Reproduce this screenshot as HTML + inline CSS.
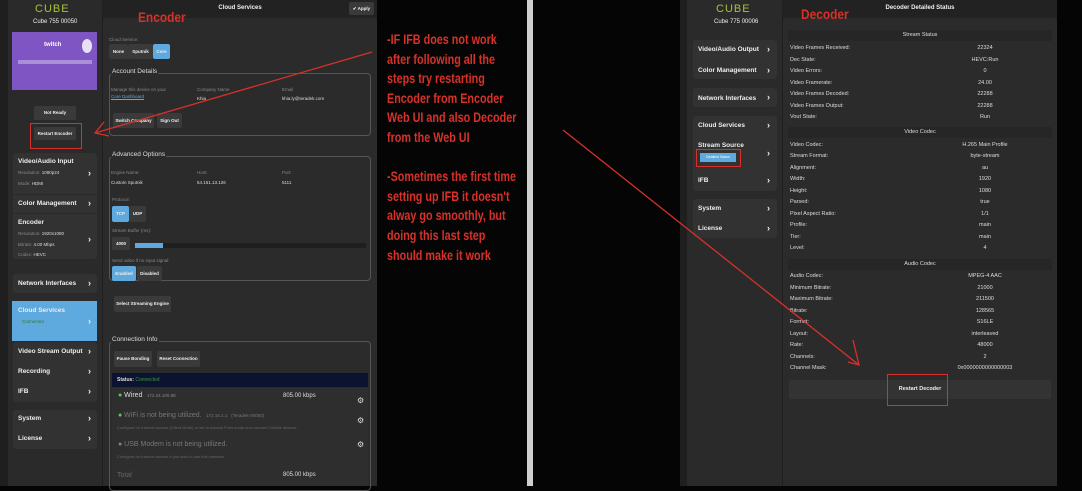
<!DOCTYPE html>
<html><head><meta charset="utf-8"><style>
*{margin:0;padding:0;box-sizing:border-box}
body{width:1082px;height:486px;background:#050505;position:relative;overflow:hidden;font-family:"Liberation Sans",sans-serif;color:#ddd;font-size:5px}
.a{position:absolute}
.sb{background:#2a2a2a}
.card{position:absolute;background:#323232;border-radius:3px}
.it{position:absolute;left:5px;font-size:6.5px;font-weight:bold;color:#eee}
.ch{position:absolute;font-size:9px;color:#eee;font-weight:bold;line-height:9px}
.sm{font-size:4.5px;color:#888}
.btn{position:absolute;background:#3a3a3a;color:#eee;font-size:4.5px;font-weight:bold;text-align:center;border-radius:2px}
.fs{position:absolute;border:1px solid #555;border-radius:4px}
.lg{position:absolute;background:#2b2b2b;font-size:6.5px;color:#ddd;padding:0 1px}
.row{position:absolute;left:790px;font-size:5.5px;color:#ddd;width:260px}
.row b{position:absolute;left:150px;width:90px;text-align:center;font-weight:normal}
.note{position:absolute;left:387px;top:30px;white-space:nowrap;color:#d8312a;font-family:"Liberation Sans",sans-serif;font-weight:bold;font-size:13.5px;line-height:19.6px;transform:scaleX(0.8);transform-origin:0 0}
</style></head><body>
<!-- ENCODER -->
<div class="a" style="left:0;top:0;width:377px;height:486px;background:#1f1f1f"></div>
<div class="a sb" style="left:8px;top:0;width:94px;height:486px"></div>
<div class="a" style="left:103px;top:0;width:274px;height:486px;background:#2b2b2b"></div>
<div class="a" style="left:103px;top:0;width:274px;height:18px;background:#222"></div>
<div class="a" style="left:190px;top:5px;width:100px;text-align:center;font-size:6px;font-weight:bold;color:#eee">Cloud Services</div>
<div class="btn" style="left:349px;top:2px;width:25px;height:13px;line-height:13px">✔ Apply</div>
<div class="a" style="left:138px;top:9px;font-size:14px;font-weight:bold;color:#d8312a;transform:scaleX(0.85);transform-origin:0 0">Encoder</div>
<div class="a" style="left:35px;top:3px;font-size:11px;color:#a6c33a;letter-spacing:1px">CUBE</div>
<div class="a" style="left:33px;top:19px;font-size:6px;color:#eee">Cube 755 00050</div>
<div class="a" style="left:12px;top:32px;width:85px;height:58px;background:#7e55c2"></div>
<div class="a" style="left:44px;top:42px;font-size:6px;color:#fff;font-weight:bold">twitch</div>
<div class="a" style="left:18px;top:60px;width:74px;height:4px;background:#a88fd8"></div>
<div class="a" style="left:82px;top:39px;width:10px;height:14px;border-radius:50%;background:#e8e0f5"></div>
<div class="btn" style="left:34px;top:106px;width:42px;height:14px;line-height:14px">Not Ready</div>
<div class="btn" style="left:34px;top:127px;width:42px;height:13px;line-height:13px">Restart Encoder</div>
<div class="a" style="left:30px;top:123px;width:52px;height:26px;border:1.5px solid #d8312a"></div>
<div class="card" style="left:13px;top:153px;width:84px;height:106px"></div>
<div class="it" style="left:18px;top:158px">Video/Audio Input</div>
<div class="a sm" style="left:18px;top:170px">Resolution: <span style="color:#ddd">1080p24</span></div>
<div class="a sm" style="left:18px;top:181px">Mode: <span style="color:#ddd">HDMI</span></div>
<div class="a" style="left:13px;top:194px;width:84px;height:1px;background:#2a2a2a"></div>
<div class="it" style="left:18px;top:200px">Color Management</div>
<div class="a" style="left:13px;top:213px;width:84px;height:1px;background:#2a2a2a"></div>
<div class="it" style="left:18px;top:219px">Encoder</div>
<div class="a sm" style="left:18px;top:231px">Resolution: <span style="color:#ddd">1920x1080</span></div>
<div class="a sm" style="left:18px;top:242px">Bitrate: <span style="color:#ddd">4.00 Mbps</span></div>
<div class="a sm" style="left:18px;top:252px">Codec: <span style="color:#ddd">HEVC</span></div>
<div class="card" style="left:13px;top:274px;width:84px;height:19px"></div>
<div class="it" style="left:18px;top:280px">Network Interfaces</div>
<div class="a" style="left:12px;top:301px;width:85px;height:40px;background:#5ea9dd"></div>
<div class="it" style="left:18px;top:307px">Cloud Services</div>
<div class="a" style="left:22px;top:319px;font-size:4.5px;color:#2d7a2d">Connected</div>
<div class="card" style="left:13px;top:342px;width:84px;height:60px"></div>
<div class="it" style="left:18px;top:348px">Video Stream Output</div>
<div class="it" style="left:18px;top:368px">Recording</div>
<div class="it" style="left:18px;top:388px">IFB</div>
<div class="card" style="left:13px;top:410px;width:84px;height:39px"></div>
<div class="it" style="left:18px;top:415px">System</div>
<div class="it" style="left:18px;top:435px">License</div>
<div class="ch" style="left:88px;top:169px">›</div>
<div class="ch" style="left:88px;top:199px">›</div>
<div class="ch" style="left:88px;top:235px">›</div>
<div class="ch" style="left:88px;top:279px">›</div>
<div class="ch" style="left:88px;top:317px">›</div>
<div class="ch" style="left:88px;top:347px">›</div>
<div class="ch" style="left:88px;top:367px">›</div>
<div class="ch" style="left:88px;top:387px">›</div>
<div class="ch" style="left:88px;top:414px">›</div>
<div class="ch" style="left:88px;top:434px">›</div>
<!-- main encoder content -->
<div class="a sm" style="left:109px;top:37px">Cloud Service:</div>
<div class="btn" style="left:109px;top:44px;width:19px;height:15px;line-height:15px">None</div>
<div class="btn" style="left:128px;top:44px;width:25px;height:15px;line-height:15px">Sputnik</div>
<div class="btn" style="left:153px;top:44px;width:17px;height:15px;line-height:15px;background:#5ea9dd">Core</div>
<div class="fs" style="left:109px;top:73px;width:262px;height:63px"></div>
<div class="lg" style="left:111px;top:68px">Account Details</div>
<div class="a sm" style="left:111px;top:87px">Manage this device on your</div>
<div class="a" style="left:111px;top:94px;font-size:4.5px;color:#5ea9dd;text-decoration:underline">Core Dashboard</div>
<div class="a sm" style="left:197px;top:87px">Company Name</div>
<div class="a" style="left:197px;top:96px;font-size:4.5px">Khia</div>
<div class="a sm" style="left:282px;top:87px">Email</div>
<div class="a" style="left:282px;top:96px;font-size:4.5px">khia.ly@teradek.com</div>
<div class="btn" style="left:113px;top:113px;width:41px;height:15px;line-height:15px">Switch Company</div>
<div class="btn" style="left:157px;top:113px;width:25px;height:15px;line-height:15px">Sign Out</div>
<div class="fs" style="left:109px;top:156px;width:262px;height:125px"></div>
<div class="lg" style="left:111px;top:151px">Advanced Options</div>
<div class="a sm" style="left:111px;top:170px">Engine Name:</div>
<div class="a" style="left:111px;top:180px;font-size:4.5px">Custom Sputnik</div>
<div class="a sm" style="left:197px;top:170px">Host:</div>
<div class="a" style="left:197px;top:180px;font-size:4.5px">54.151.13.126</div>
<div class="a sm" style="left:282px;top:170px">Port:</div>
<div class="a" style="left:282px;top:180px;font-size:4.5px">5111</div>
<div class="a sm" style="left:112px;top:197px">Protocol:</div>
<div class="btn" style="left:112px;top:206px;width:17px;height:16px;line-height:16px;background:#5ea9dd">TCP</div>
<div class="btn" style="left:129px;top:206px;width:17px;height:16px;line-height:16px">UDP</div>
<div class="a sm" style="left:112px;top:228px">Stream Buffer (ms):</div>
<div class="btn" style="left:112px;top:237px;width:18px;height:13px;line-height:13px">4000</div>
<div class="a" style="left:135px;top:243px;width:231px;height:5px;background:#1f1f1f"></div>
<div class="a" style="left:135px;top:243px;width:28px;height:5px;background:#5ea9dd"></div>
<div class="a sm" style="left:112px;top:258px">Send video if no input signal:</div>
<div class="btn" style="left:112px;top:266px;width:24px;height:15px;line-height:15px;background:#5ea9dd">Enabled</div>
<div class="btn" style="left:137px;top:266px;width:25px;height:15px;line-height:15px">Disabled</div>
<div class="btn" style="left:114px;top:296px;width:57px;height:16px;line-height:16px">Select Streaming Engine</div>
<div class="fs" style="left:109px;top:341px;width:262px;height:150px"></div>
<div class="lg" style="left:111px;top:336px">Connection Info</div>
<div class="btn" style="left:114px;top:351px;width:38px;height:16px;line-height:16px">Pause Bonding</div>
<div class="btn" style="left:157px;top:351px;width:43px;height:16px;line-height:16px">Reset Connection</div>
<div class="a" style="left:112px;top:373px;width:256px;height:14px;background:#0c1330"></div>
<div class="a" style="left:117px;top:377px;font-size:5px;font-weight:bold">Status: <span style="color:#3a9a3a;font-weight:normal">Connected</span></div>
<div class="a" style="left:112px;top:388px;width:256px;height:98px;background:#2e2e2e"></div>
<div class="a" style="left:118px;top:392px;font-size:7px;color:#ddd"><span style="color:#5c5">●</span> Wired <span style="font-size:4.5px;color:#888">&nbsp; 172.24.100.98</span></div>
<div class="a" style="left:283px;top:393px;font-size:6px">805.00 kbps</div>
<div class="a" style="left:118px;top:412px;font-size:7px;color:#777"><span style="color:#5c5">●</span> WiFi is not being utilized. <span style="font-size:4.5px">&nbsp; 172.16.1.1 &nbsp; (Teradek-00050)</span></div>
<div class="a" style="left:117px;top:425px;font-size:4px;color:#666">Configure for Internet access (Client Mode) or set to Access Point mode and connect Cellular devices.</div>
<div class="a" style="left:118px;top:441px;font-size:7px;color:#777"><span style="color:#977">●</span> USB Modem is not being utilized.</div>
<div class="a" style="left:117px;top:454px;font-size:4px;color:#666">Configure for Internet access if you wish to use this interface.</div>
<div class="a" style="left:117px;top:472px;font-size:7px;color:#666">Total</div>
<div class="a" style="left:283px;top:472px;font-size:6px">805.00 kbps</div>
<div class="a" style="left:357px;top:391px;font-size:8px;color:#ddd;line-height:20px">⚙<br>⚙<br><span style="line-height:28px">⚙</span></div>
<!-- scrollbar -->
<div class="a" style="left:527px;top:0;width:6px;height:486px;background:#cfcfcf"></div>
<!-- note -->
<div class="note">-IF IFB does not work<br>after following all the<br>steps try restarting<br>Encoder from Encoder<br>Web UI and also Decoder<br>from the Web UI<br><br>-Sometimes the first time<br>setting up IFB it doesn't<br>alway go smoothly, but<br>doing this last step<br>should make it work</div>
<!-- DECODER -->
<div class="a" style="left:680px;top:0;width:377px;height:486px;background:#1f1f1f"></div>
<div class="a sb" style="left:687px;top:0;width:95px;height:486px"></div>
<div class="a" style="left:783px;top:0;width:274px;height:486px;background:#2b2b2b"></div>
<div class="a" style="left:783px;top:0;width:274px;height:18px;background:#222"></div>
<div class="a" style="left:870px;top:5px;width:100px;text-align:center;font-size:6px;font-weight:bold;color:#eee">Decoder Detailed Status</div>
<div class="a" style="left:801px;top:6px;font-size:14px;font-weight:bold;color:#d8312a;transform:scaleX(0.85);transform-origin:0 0">Decoder</div>
<div class="a" style="left:716px;top:3px;font-size:11px;color:#a6c33a;letter-spacing:1px">CUBE</div>
<div class="a" style="left:714px;top:19px;font-size:6px;color:#eee">Cube 775 00006</div>
<div class="card" style="left:693px;top:40px;width:84px;height:39px"></div>
<div class="it" style="left:698px;top:46px">Video/Audio Output</div>
<div class="it" style="left:698px;top:67px">Color Management</div>
<div class="card" style="left:693px;top:88px;width:84px;height:19px"></div>
<div class="it" style="left:698px;top:95px">Network Interfaces</div>
<div class="card" style="left:693px;top:116px;width:84px;height:75px"></div>
<div class="it" style="left:698px;top:122px">Cloud Services</div>
<div class="it" style="left:698px;top:142px">Stream Source</div>
<div class="a" style="left:700px;top:153px;width:36px;height:9px;background:#5ea9dd;font-size:3.5px;color:#fff;text-align:center;line-height:9px">Detailed Status</div>
<div class="a" style="left:696px;top:149px;width:45px;height:18px;border:1.5px solid #d8312a"></div>
<div class="it" style="left:698px;top:177px">IFB</div>
<div class="card" style="left:693px;top:199px;width:84px;height:39px"></div>
<div class="it" style="left:698px;top:205px">System</div>
<div class="it" style="left:698px;top:225px">License</div>
<div class="ch" style="left:767px;top:45px">›</div>
<div class="ch" style="left:767px;top:66px">›</div>
<div class="ch" style="left:767px;top:93px">›</div>
<div class="ch" style="left:767px;top:121px">›</div>
<div class="ch" style="left:767px;top:149px">›</div>
<div class="ch" style="left:767px;top:176px">›</div>
<div class="ch" style="left:767px;top:204px">›</div>
<div class="ch" style="left:767px;top:224px">›</div>
<div class="a" style="left:788px;top:30px;width:264px;height:11px;background:#262626;text-align:center;font-size:5.5px;line-height:11px">Stream Status</div>
<div class="a" style="left:788px;top:127px;width:264px;height:11px;background:#262626;text-align:center;font-size:5.5px;line-height:11px">Video Codec</div>
<div class="a" style="left:788px;top:259px;width:264px;height:11px;background:#262626;text-align:center;font-size:5.5px;line-height:11px">Audio Codec</div>
<div class="row" style="top:45px">Video Frames Received:<b>22324</b></div>
<div class="row" style="top:57px">Dec State:<b>HEVC:Run</b></div>
<div class="row" style="top:68px">Video Errors:<b>0</b></div>
<div class="row" style="top:80px">Video Framerate:<b>24.00</b></div>
<div class="row" style="top:91px">Video Frames Decoded:<b>22288</b></div>
<div class="row" style="top:103px">Video Frames Output:<b>22288</b></div>
<div class="row" style="top:114px">Vout State:<b>Run</b></div>
<div class="row" style="top:142px">Video Codec:<b>H.265 Main Profile</b></div>
<div class="row" style="top:153px">Stream Format:<b>byte-stream</b></div>
<div class="row" style="top:165px">Alignment:<b>au</b></div>
<div class="row" style="top:176px">Width:<b>1920</b></div>
<div class="row" style="top:188px">Height:<b>1080</b></div>
<div class="row" style="top:199px">Parsed:<b>true</b></div>
<div class="row" style="top:211px">Pixel Aspect Ratio:<b>1/1</b></div>
<div class="row" style="top:222px">Profile:<b>main</b></div>
<div class="row" style="top:234px">Tier:<b>main</b></div>
<div class="row" style="top:245px">Level:<b>4</b></div>
<div class="row" style="top:273px">Audio Codec:<b>MPEG-4 AAC</b></div>
<div class="row" style="top:285px">Minimum Bitrate:<b>21000</b></div>
<div class="row" style="top:296px">Maximum Bitrate:<b>211500</b></div>
<div class="row" style="top:308px">Bitrate:<b>128565</b></div>
<div class="row" style="top:319px">Format:<b>S16LE</b></div>
<div class="row" style="top:331px">Layout:<b>interleaved</b></div>
<div class="row" style="top:342px">Rate:<b>48000</b></div>
<div class="row" style="top:354px">Channels:<b>2</b></div>
<div class="row" style="top:365px">Channel Mask:<b>0x0000000000000003</b></div>
<div class="a" style="left:789px;top:380px;width:262px;height:19px;background:#333;border-radius:2px;text-align:center;font-size:5.5px;font-weight:bold;line-height:19px;color:#eee">Restart Decoder</div>
<div class="a" style="left:887px;top:374px;width:61px;height:32px;border:1.5px solid #d8312a"></div>
<!-- arrows -->
<svg class="a" style="left:0;top:0" width="1082" height="486">
<g stroke="#d8312a" stroke-width="1.3" fill="none">
<line x1="372" y1="52" x2="95" y2="133"/>
<polyline points="104,122 95,133 109,136"/>
<line x1="563" y1="130" x2="859" y2="365"/>
<polyline points="853,340 859,365 848,362"/>
</g></svg>
</body></html>
